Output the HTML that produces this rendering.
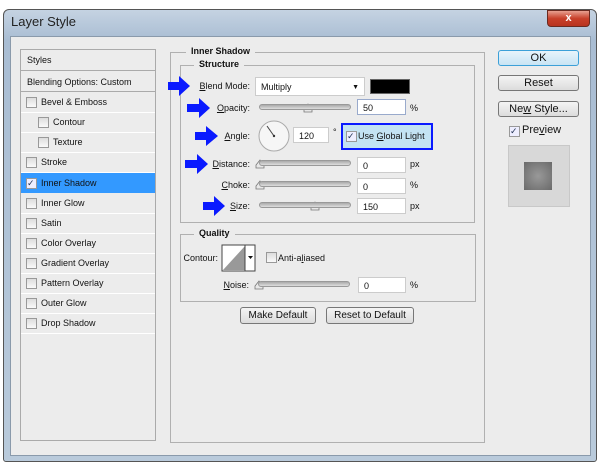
<!DOCTYPE html>
<html><head><style>
body{margin:0;width:600px;height:470px;background:#fff;position:relative;overflow:hidden;font-family:"Liberation Sans",sans-serif;font-size:9px;color:#111}
.a{position:absolute}
.win{left:3px;top:9px;width:592px;height:451px;border:1px solid #555;border-radius:6px 6px 3px 3px;background:linear-gradient(#c5d3e2,#a9bdd3 30px,#b9cadb);}
.content{left:10px;top:36px;width:579px;height:418px;background:#ececec;border:1px solid #8a9aab}
.lp{left:20px;top:49px;width:134px;height:390px;border:1px solid #aaa;background:#ececec}
.row{position:absolute;left:0;width:134px;height:20px;border-bottom:1px solid #fff;line-height:20px}
.cb{position:absolute;width:9px;height:9px;border:1px solid #999;background:linear-gradient(#ddd,#fafafa)}
.grp{border:1px solid #b0b0b0}
.lg{position:absolute;background:#ececec;padding:0 5px;font-weight:bold;font-size:9px}
.lbl{position:absolute;text-align:right;width:80px}
.inp{position:absolute;background:#fff;border:1px solid #ccc;height:16px;line-height:16px;padding-left:5px;box-sizing:border-box}
.sl{position:absolute;height:4px;border:1px solid #999;border-radius:3px;background:linear-gradient(#aaa,#ddd)}
.btn{position:absolute;border:1px solid #777;border-radius:3px;background:linear-gradient(#f4f4f4,#dcdcdc);text-align:center;box-sizing:border-box;font-size:10px}
.arr{position:absolute}
</style></head><body>
<div class="a win"></div>
<div class="a" style="left:11px;top:14px;font-size:13px;color:#222">Layer Style</div>
<div class="a" style="left:547px;top:10px;width:43px;height:17px;border-radius:0 0 4px 4px;background:linear-gradient(#e8a090,#c8402a 50%,#b83420);border:1px solid #6a2a20;box-sizing:border-box;color:#fff;text-align:center;font-weight:bold;font-size:11px;line-height:15px">x</div>
<div class="a content"></div>

<div class="a lp">
<div class="row" style="top:0;height:21px;line-height:21px;padding-left:6px;box-sizing:border-box;border-bottom:1px solid #aaa">Styles</div>
<div class="row" style="top:22px;padding-left:6px;box-sizing:border-box;border-bottom:1px solid #aaa">Blending Options: Custom</div>
<div class="row" style="top:42px"><span class="cb" style="left:5px;top:5px"></span><span style="position:absolute;left:20px">Bevel &amp; Emboss</span></div>
<div class="row" style="top:62px"><span class="cb" style="left:17px;top:5px"></span><span style="position:absolute;left:32px">Contour</span></div>
<div class="row" style="top:82px"><span class="cb" style="left:17px;top:5px"></span><span style="position:absolute;left:32px">Texture</span></div>
<div class="row" style="top:102px"><span class="cb" style="left:5px;top:5px"></span><span style="position:absolute;left:20px">Stroke</span></div>
<div class="row" style="top:123px;background:#3399ff;border-bottom:0"><span class="cb" style="left:5px;top:5px;background:#eef;font-size:9px;line-height:9px;color:#235">✓</span><span style="position:absolute;left:20px">Inner Shadow</span></div>
<div class="row" style="top:143px"><span class="cb" style="left:5px;top:5px"></span><span style="position:absolute;left:20px">Inner Glow</span></div>
<div class="row" style="top:163px"><span class="cb" style="left:5px;top:5px"></span><span style="position:absolute;left:20px">Satin</span></div>
<div class="row" style="top:183px"><span class="cb" style="left:5px;top:5px"></span><span style="position:absolute;left:20px">Color Overlay</span></div>
<div class="row" style="top:203px"><span class="cb" style="left:5px;top:5px"></span><span style="position:absolute;left:20px">Gradient Overlay</span></div>
<div class="row" style="top:223px"><span class="cb" style="left:5px;top:5px"></span><span style="position:absolute;left:20px">Pattern Overlay</span></div>
<div class="row" style="top:243px"><span class="cb" style="left:5px;top:5px"></span><span style="position:absolute;left:20px">Outer Glow</span></div>
<div class="row" style="top:263px"><span class="cb" style="left:5px;top:5px"></span><span style="position:absolute;left:20px">Drop Shadow</span></div>
</div>

<div class="a grp" style="left:170px;top:52px;width:313px;height:389px"></div>
<div class="lg" style="left:186px;top:46px">Inner Shadow</div>
<div class="a grp" style="left:180px;top:65px;width:293px;height:156px"></div>
<div class="lg" style="left:194px;top:59px">Structure</div>

<svg class="arr" style="left:0;top:0" width="600" height="470">
<g fill="#0a1aff">
<path d="M168 82h11v-6l11 10-11 10v-6h-11z"/>
<path d="M187 104h12v-6l11 10-11 10v-6h-12z"/>
<path d="M195 132h11v-6l12 10-12 10v-6h-11z"/>
<path d="M185 160h12v-6l11 10-11 10v-6h-12z"/>
<path d="M203 202h11v-6l11 10-11 10v-6h-11z"/>
</g>
<circle cx="274" cy="136" r="15" fill="#f6f6f6" stroke="#aaa"/>
<line x1="274" y1="136" x2="267" y2="126" stroke="#444" stroke-width="1"/>
<circle cx="274" cy="136" r="1.2" fill="#333"/>
<g fill="#e8e8e8" stroke="#777" stroke-width="0.8">
<path d="M304 109l4-5 4 5v3h-8z"/>
<path d="M256 165l4-5 4 5v3h-8z"/>
<path d="M256 186l4-5 4 5v3h-8z"/>
<path d="M311 207l4-5 4 5v3h-8z"/>
<path d="M255 286l4-5 4 5v3h-8z"/>
</g>
<rect x="222" y="245" width="33" height="26" fill="#fff" stroke="#444"/>
<path d="M223 270L245 246V270z" fill="#999"/>
<line x1="245" y1="245" x2="245" y2="271" stroke="#444"/>
<path d="M248 256h5l-2.5 3z" fill="#111"/>
</svg>

<div class="lbl" style="left:170px;top:81px"><u>B</u>lend Mode:</div>
<div class="inp" style="left:255px;top:77px;width:110px;height:19px;line-height:19px">Multiply<span style="position:absolute;right:5px;top:0;font-size:7px">▼</span></div>
<div class="a" style="left:370px;top:79px;width:38px;height:13px;background:#000;border:1px solid #666"></div>

<div class="lbl" style="left:170px;top:103px"><u>O</u>pacity:</div>
<div class="sl" style="left:259px;top:104px;width:90px"></div>
<div class="inp" style="left:357px;top:99px;width:49px;border-color:#9ac">50</div>
<div class="a" style="left:410px;top:103px">%</div>

<div class="lbl" style="left:170px;top:131px"><u>A</u>ngle:</div>
<div class="inp" style="left:293px;top:127px;width:36px">120</div>
<div class="a" style="left:333px;top:127px">°</div>
<div class="a" style="left:341px;top:123px;width:92px;height:27px;border:2px solid #0a1aff;box-sizing:border-box;background:#c3e3f3"></div>
<span class="cb" style="left:346px;top:131px;background:#eef;font-size:9px;line-height:9px;color:#235">✓</span>
<div class="a" style="left:358px;top:131px">Use <u>G</u>lobal Light</div>

<div class="lbl" style="left:170px;top:159px"><u>D</u>istance:</div>
<div class="sl" style="left:259px;top:160px;width:90px"></div>
<div class="inp" style="left:357px;top:157px;width:49px">0</div>
<div class="a" style="left:410px;top:159px">px</div>

<div class="lbl" style="left:170px;top:180px"><u>C</u>hoke:</div>
<div class="sl" style="left:259px;top:181px;width:90px"></div>
<div class="inp" style="left:357px;top:178px;width:49px">0</div>
<div class="a" style="left:410px;top:180px">%</div>

<div class="lbl" style="left:170px;top:201px"><u>S</u>ize:</div>
<div class="sl" style="left:259px;top:202px;width:90px"></div>
<div class="inp" style="left:357px;top:198px;width:49px">150</div>
<div class="a" style="left:410px;top:201px">px</div>

<div class="a grp" style="left:180px;top:234px;width:294px;height:66px"></div>
<div class="lg" style="left:194px;top:228px">Quality</div>
<div class="lbl" style="left:138px;top:253px">Contour:</div>
<span class="cb" style="left:266px;top:252px"></span>
<div class="a" style="left:278px;top:253px">Anti-a<u>l</u>iased</div>
<div class="lbl" style="left:169px;top:280px"><u>N</u>oise:</div>
<div class="sl" style="left:258px;top:281px;width:90px"></div>
<div class="inp" style="left:358px;top:277px;width:48px">0</div>
<div class="a" style="left:410px;top:280px">%</div>

<div class="btn" style="left:240px;top:307px;width:76px;height:17px;line-height:15px">Make Default</div>
<div class="btn" style="left:326px;top:307px;width:88px;height:17px;line-height:15px">Reset to Default</div>

<div class="btn" style="left:498px;top:50px;width:81px;height:16px;line-height:14px;font-size:11px;border-color:#3ca0d8;background:linear-gradient(#e8f4fb,#c8e4f4)">OK</div>
<div class="btn" style="left:498px;top:75px;width:81px;height:16px;line-height:14px;font-size:11px">Reset</div>
<div class="btn" style="left:498px;top:101px;width:81px;height:16px;line-height:14px;font-size:11px">Ne<u>w</u> Style...</div>
<span class="cb" style="left:509px;top:126px;background:#eef;font-size:9px;line-height:9px;color:#235">✓</span>
<div class="a" style="left:522px;top:124px;font-size:11px">Pre<u>v</u>iew</div>
<div class="a" style="left:508px;top:145px;width:60px;height:60px;background:#d8d8d8;border:1px solid #c8c8c8"></div>
<div class="a" style="left:524px;top:162px;width:28px;height:28px;background:radial-gradient(#999,#6a6a6a)"></div>
</body></html>
